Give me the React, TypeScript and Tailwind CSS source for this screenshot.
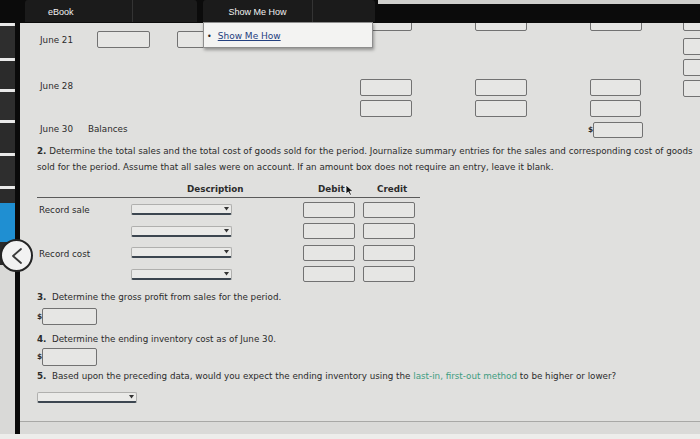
import React from "react";

const Box = ({ cls = "" }: { cls?: string }) => (
  <div className={`shrink-0 border-[1.5px] border-[#727272] rounded-[2px] bg-[#e6e6e4] ${cls}`} />
);

const Select = ({ cls = "" }: { cls?: string }) => (
  <div
    className={`relative shrink-0 h-[11px] bg-[#eaeae8] border border-[#b0b0ae] border-b-2 border-b-[#3c4650] rounded-[2px] ${cls}`}
  >
    <svg className="absolute right-[2px] top-[2px]" width="5" height="4" viewBox="0 0 5 4">
      <path d="M0 0 L5 0 L2.5 3.5 Z" fill="#333" />
    </svg>
  </div>
);

const Dash = () => <div className="h-[3px] w-[14px] bg-[#e9e9e9] rounded-r-[1px] shrink-0" />;

export default function App() {
  return (
    <div className="relative w-[700px] h-[439px] overflow-hidden bg-[#e0e0de] font-['DejaVu_Sans',sans-serif] text-[#2b2b2b] text-[8.75px]">
      <div className="flex flex-col h-full">
        {/* top bar */}
        <div className="h-[23px] flex shrink-0">
          <div className="w-[378px] bg-[#0b0b0b] flex items-start">
            <div className="ml-[25px] w-[172px] h-[22px] bg-[#1b1b1b] rounded-t-[3px] flex font-['Liberation_Sans',sans-serif] text-[9px] text-[#f2f2f2]">
              <div className="w-[107px] flex items-center pl-[23px] pt-[3px]">eBook</div>
              <div className="w-px bg-[#343434]" />
            </div>
            <div className="ml-[6px] w-[172px] h-[22px] bg-[#1b1b1b] rounded-t-[3px] flex font-['Liberation_Sans',sans-serif] text-[9px] text-[#f2f2f2]">
              <div className="w-[109px] flex items-center justify-center pt-[4px]">Show Me How</div>
              <div className="w-px bg-[#343434]" />
            </div>
          </div>
          <div className="flex-1 flex flex-col">
            <div className="h-[4px] bg-[#cfcfcd]" />
            <div className="flex-1 bg-[#0b0b0b]" />
          </div>
        </div>

        <div className="flex flex-1 min-h-0">
          {/* left strip */}
          <div className="w-[15px] flex flex-col shrink-0">
            <Dash />
            <div className="h-[32px] bg-[#2e2e2e]" />
            <Dash />
            <div className="h-[28px] bg-[#2b2b2b]" />
            <Dash />
            <div className="h-[28px] bg-[#2e2e2e]" />
            <Dash />
            <div className="h-[30px] bg-[#2b2b2b]" />
            <Dash />
            <div className="h-[30px] bg-[#2e2e2e]" />
            <Dash />
            <div className="h-[14px] bg-[#2b2b2b]" />
            <div className="h-[39px] bg-[#1f8fd2]" />
            <div className="h-[23px] bg-[#2b2b2b]" />
            <div className="flex-1 bg-[#d9d9d7]" />
          </div>
          <div className="w-[5px] bg-[#0a0a0a] shrink-0" />

          {/* content */}
          <div className="flex-1 min-w-0 overflow-hidden flex flex-col">
            {/* ledger area */}
            <div className="flex shrink-0">
              <div className="w-[663px] shrink-0 flex flex-col">
                <div className="h-[8px] flex items-end overflow-hidden">
                  <Box cls="ml-[340px] w-[52px] h-[18px]" />
                  <Box cls="ml-[63px] w-[52px] h-[18px]" />
                  <Box cls="ml-[63px] w-[52px] h-[18px]" />
                </div>
                <div className="h-[17px] flex items-center">
                  <div className="ml-[20px] w-[57px] pt-[3px]">June 21</div>
                  <Box cls="w-[53px] h-[17px]" />
                  <Box cls="ml-[27px] w-[53px] h-[17px]" />
                  <Box cls="ml-[30px] w-[53px] h-[17px]" />
                </div>
                <div className="mt-[31px] flex items-start">
                  <div className="ml-[20px] w-[320px] mt-[1px]">June 28</div>
                  <div className="flex flex-col gap-[4px]">
                    <Box cls="w-[52px] h-[17px]" />
                    <Box cls="w-[52px] h-[17px]" />
                  </div>
                  <div className="ml-[63px] flex flex-col gap-[4px]">
                    <Box cls="w-[52px] h-[17px]" />
                    <Box cls="w-[52px] h-[17px]" />
                  </div>
                  <div className="ml-[63px] flex flex-col gap-[4px]">
                    <Box cls="w-[51px] h-[17px]" />
                    <Box cls="w-[51px] h-[17px]" />
                  </div>
                </div>
                <div className="mt-[5px] h-[16px] flex items-center">
                  <div className="ml-[20px] w-[48px]">June 30</div>
                  <div className="w-[500px]">Balances</div>
                  <div className="w-[5px] text-[7.5px] font-bold">$</div>
                  <Box cls="w-[50px] h-[16px]" />
                </div>
              </div>
              <div className="w-[50px] shrink-0 flex flex-col">
                <div className="h-[8px] flex items-end overflow-hidden">
                  <Box cls="w-[50px] h-[18px]" />
                </div>
                <div className="mt-[7px] flex flex-col gap-[4px]">
                  <Box cls="w-[50px] h-[17px]" />
                  <Box cls="w-[50px] h-[17px]" />
                  <Box cls="w-[50px] h-[17px]" />
                </div>
              </div>
            </div>

            {/* question 2 */}
            <div className="mt-[5px] pl-[17px] leading-[16px] whitespace-nowrap">
              <div>
                <b>2.</b> Determine the total sales and the total cost of goods sold for the period. Journalize summary entries for the sales and corresponding cost of goods
              </div>
              <div>sold for the period. Assume that all sales were on account. If an amount box does not require an entry, leave it blank.</div>
            </div>

            {/* table */}
            <div className="ml-[17px] w-[383px] mt-[7px] shrink-0">
              <div className="h-[16px] flex items-center font-bold border-b border-[#5a5a5a]">
                <div className="w-[150px]" />
                <div className="w-[131px]">Description</div>
                <div className="w-[59px]">Debit</div>
                <div>Credit</div>
              </div>
              <div className="flex flex-col mt-[1px]">
                <div className="h-[21.5px] flex items-center">
                  <div className="w-[94px] pl-[2px] pt-[2px]">Record sale</div>
                  <Select cls="w-[101px]" />
                  <Box cls="ml-[71px] w-[52px] h-[16px]" />
                  <Box cls="ml-[8px] w-[52px] h-[16px]" />
                </div>
                <div className="h-[21.5px] flex items-center">
                  <div className="w-[94px]" />
                  <Select cls="w-[101px]" />
                  <Box cls="ml-[71px] w-[52px] h-[16px]" />
                  <Box cls="ml-[8px] w-[52px] h-[16px]" />
                </div>
                <div className="h-[21.5px] flex items-center">
                  <div className="w-[94px] pl-[2px] pt-[3px]">Record cost</div>
                  <Select cls="w-[101px]" />
                  <Box cls="ml-[71px] w-[52px] h-[16px]" />
                  <Box cls="ml-[8px] w-[52px] h-[16px]" />
                </div>
                <div className="h-[21.5px] flex items-center">
                  <div className="w-[94px]" />
                  <Select cls="w-[101px]" />
                  <Box cls="ml-[71px] w-[52px] h-[16px]" />
                  <Box cls="ml-[8px] w-[52px] h-[16px]" />
                </div>
              </div>
            </div>

            {/* question 3 */}
            <div className="pl-[17px] mt-[5px] leading-[14px] whitespace-nowrap">
              <b>3.</b>&nbsp; Determine the gross profit from sales for the period.
            </div>
            <div className="pl-[17px] mt-[4px] flex items-center">
              <div className="w-[5px] text-[7.5px] font-bold">$</div>
              <Box cls="w-[55px] h-[17px]" />
            </div>

            {/* question 4 */}
            <div className="pl-[17px] mt-[7px] leading-[14px] whitespace-nowrap">
              <b>4.</b>&nbsp; Determine the ending inventory cost as of June 30.
            </div>
            <div className="pl-[17px] mt-[2px] flex items-center">
              <div className="w-[5px] text-[7.5px] font-bold">$</div>
              <Box cls="w-[55px] h-[18px]" />
            </div>

            {/* question 5 */}
            <div className="pl-[17px] mt-[3px] leading-[14px] whitespace-nowrap">
              <b>5.</b>&nbsp; Based upon the preceding data, would you expect the ending inventory using the{" "}
              <span className="text-[#3e9c80]">last-in, first-out method</span> to be higher or lower?
            </div>
            <div className="pl-[17px] mt-[9px]">
              <Select cls="w-[100px]" />
            </div>

            <div className="mt-[18px] border-t border-[#a8a8a6] flex-1 bg-[#dadad8]" />
          </div>
        </div>
        <div className="h-[5px] bg-[#ededeb] shrink-0" />
      </div>

      {/* Show Me How popup */}
      <div className="absolute left-[203px] top-[22px] w-[170px] h-[26px] bg-[#f3f3f2] border border-[#8e8e8e] shadow-[1px_2px_3px_rgba(0,0,0,0.35)] flex items-center pl-[3px] pt-[3px]">
        <span className="text-[8px] text-[#222]">•</span>
        <span className="ml-[6px] text-[9px] text-[#24407f] underline">Show Me How</span>
      </div>

      {/* back circle */}
      <div className="absolute left-0 top-[239px] w-[33px] h-[33px] rounded-full bg-[#f2f2f2] border-2 border-[#242424] flex items-center justify-center">
        <svg width="14" height="18" viewBox="0 0 14 18">
          <path d="M11 2 L3 9 L11 16" fill="none" stroke="#3a3a3a" strokeWidth="1.8" strokeLinecap="round" strokeLinejoin="round" />
        </svg>
      </div>

      {/* mouse cursor */}
      <svg className="absolute left-[345px] top-[184px]" width="9" height="12" viewBox="0 0 9 12">
        <path d="M1 1 L1 10 L3.3 8 L5 11.3 L6.5 10.6 L4.9 7.4 L8 7.2 Z" fill="#111" stroke="#fff" strokeWidth="0.8" />
      </svg>
    </div>
  );
}
